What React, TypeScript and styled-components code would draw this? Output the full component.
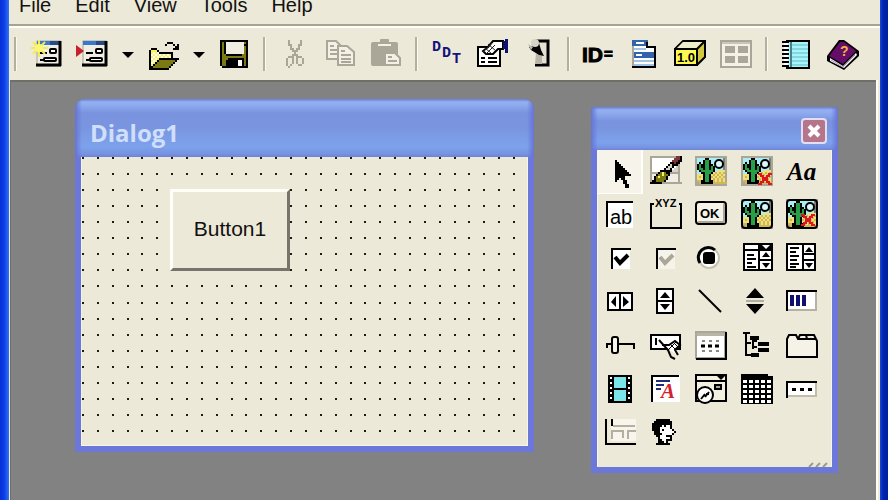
import React from "react";
import styled, { createGlobalStyle, css } from "styled-components";

const GlobalStyle = createGlobalStyle`
  *, *::before, *::after { box-sizing: border-box; }
  body { margin: 0; font-family: "Liberation Sans", Arial, sans-serif; background: #ece9d8; color: #111; overflow: hidden; }
  button { font: inherit; color: inherit; }
`;

const face = "#ece9d8";

const AppWindow = styled.div`
  display: flex;
  flex-direction: column;
  height: 100vh;
  background: ${face};
  border-left: 9px solid #0a3be0;
  border-right: 8px solid #0224ac;
  border-image: linear-gradient(90deg, #0830d4 0, #0a3ce8 4px, #2f74f4 9px, #2f74f4 50%, #1a48d0 calc(100% - 8px), #0224b4 calc(100% - 5px), #001e9c 100%) 0 8 0 9;
`;

const MenuBar = styled.nav`
  display: flex;
  align-items: flex-end;
  gap: 24px;
  height: 26px;
  padding: 0 10px 7px;
  flex: none;
  border-bottom: 2px solid #a5a392;
`;

const MenuItem = styled.button`
  padding: 0;
  border: 0;
  background: none;
  font-size: 20px;
  line-height: 24px;
`;

const ToolBar = styled.div`
  display: flex;
  align-items: center;
  flex: none;
  height: 54px;
  padding-left: 5px;
  border-top: 2px solid #fffef6;
`;

const Rule = styled.span<{ $grip?: boolean }>`
  flex: none;
  width: 3px;
  height: 34px;
  margin: ${(p) => (p.$grip ? "0 6px 0 0" : "0 5px 0 6px")};
  border-left: 2px solid #b3b09f;
  border-right: 1px solid #fbfaf2;
`;

const ToolButton = styled.button<{ $narrow?: boolean }>`
  display: flex;
  align-items: center;
  justify-content: center;
  flex: none;
  width: ${(p) => (p.$narrow ? 25 : 46)}px;
  height: 42px;
  padding: 0;
  border: 0;
  background: none;
`;

const Workspace = styled.main`
  position: relative;
  flex: 1;
  margin: 0 4px 0 1px;
  background: #828282;
  border-top: 2px solid #6f6e68;
  border-left: 1px solid #6f6e68;
  box-shadow: 2px 0 0 #fffef6;
`;

const frame = css`
  position: absolute;
  display: flex;
  flex-direction: column;
  border: 6px solid #6b78da;
  border-top: 0;
  background: #6b78da;
`;

const DialogFrame = styled.section`
  ${frame}
  left: 64px;
  top: 17px;
  width: 459px;
  height: 353px;
  border-radius: 10px 10px 0 0;
`;

const PaletteFrame = styled.section`
  ${frame}
  left: 580px;
  top: 25px;
  width: 247px;
  height: 366px;
  border-radius: 3px 3px 0 0;
`;

const TitleBar = styled.header<{ $small?: boolean }>`
  display: flex;
  align-items: center;
  flex: none;
  height: ${(p) => (p.$small ? 43 : 58)}px;
  margin: 0 -6px;
  padding: ${(p) => (p.$small ? "4px 11px 0" : "9px 15px 0")};
  justify-content: ${(p) => (p.$small ? "flex-end" : "flex-start")};
  border-radius: inherit;
  background:
    linear-gradient(90deg, #6674d6 0, transparent 7px, transparent calc(100% - 7px), #6674d6 100%),
    linear-gradient(#6a7cda 0, #94b0f2 3px, #8eabee 6px, #7a93df 14px, #7a95e0 50%, #7da2ec 82%, #7793e2 94%, #6e84d4 100%);
`;

const Title = styled.h1`
  margin: 0;
  font: bold 24px/32px "Open Sans", "Noto Sans", sans-serif;
  color: #d0dffb;
`;

const CloseButton = styled.button`
  display: flex;
  width: 26px;
  height: 26px;
  padding: 3px;
  border: 2px solid #e3def4;
  border-radius: 4px;
  background: #b5768c;
`;

const Form = styled.div`
  position: relative;
  flex: 1;
  background: ${face};
  border: 1px solid #f7f4ea;
  border-top: 0;
  overflow: hidden;
`;

const DotGrid = styled.svg`
  display: block;
  width: 100%;
  height: 100%;
`;

const FormButton = styled.button`
  position: absolute;
  left: 88px;
  top: 32px;
  width: 120px;
  height: 82px;
  padding: 0 0 3px;
  border: 3px solid;
  border-color: #fffef8 #77756b #77756b #fffef8;
  background: ${face};
  font-size: 21px;
`;

const Palette = styled.div`
  display: flex;
  flex-direction: column;
  flex: 1;
  background: ${face};
  border-left: 1px solid #f7f4ea;
  border-right: 1px solid #f7f4ea;
`;

const ControlGrid = styled.div`
  display: grid;
  grid-template-columns: repeat(5, 1fr);
  grid-template-rows: repeat(7, 1fr);
  height: 305px;
  padding-right: 6px;
`;

const ControlButton = styled.button`
  display: flex;
  align-items: center;
  justify-content: center;
  min-width: 0;
  min-height: 0;
  padding: 0;
  border: 0;
  background: none;
  &[aria-pressed="true"] {
    background: #f5f3ea;
    box-shadow: inset -2px -1px 0 #fffef8;
  }
`;

const Resizer = styled.svg`
  align-self: flex-end;
  width: 24px;
  height: 12px;
`;

const Glyph = styled.svg`
  display: block;
  flex: none;
  width: 32px;
  height: 32px;
  overflow: visible;
`;

const inks: Record<string, string> = {
  k: "#000", w: "#fff", g: "#808078", s: "#aaa799", o: "#7b7a12", y: "#f8f35a", c: "#a9eef6",
  G: "#26a047", t: "#cdb757", Y: "#f1df7c", r: "#dd1521", m: "#7d3636", n: "#10106e",
  b: "#3264ae", l: "#9ec2e8", h: "#d5d3c6", f: "#f0eee2",
};

/* Bitmap rows, one letter per 2px square. */
function Pix({ rows, x = 0, y = 0 }: { rows: string; x?: number; y?: number }) {
  const out: React.ReactNode[] = [];
  rows.trim().split(/\s+/).forEach((row, j) => {
    for (let i = 0; i < row.length; ) {
      let n = 1;
      while (row[i + n] === row[i]) n++;
      if (row[i] !== ".") {
        out.push(<rect key={`${j}-${i}`} x={x + i * 2} y={y + j * 2} width={n * 2} height={2} fill={inks[row[i]]} />);
      }
      i += n;
    }
  });
  return <g shapeRendering="crispEdges">{out}</g>;
}

const L = ({ d, c = "#000", w = 2, f = "none" }: { d: string; c?: string; w?: number; f?: string }) => (
  <path d={d} stroke={c} strokeWidth={w} fill={f} />
);
const F = ({ d, c = "#000" }: { d: string; c?: string }) => <path d={d} fill={c} />;

const DialogArt = () => (
  <>
    <rect x={7} y={3} width={23} height={25} fill="#f0eee2" stroke="#a3a196" strokeWidth={1} />
    <F d="M7 3H20V7H7Z" c="#3a78cc" />
    <F d="M20 3H30V7H20Z" c="#274a86" />
    <L d="M6 27H31M30 3V28" w={3} />
    <L d="M10 15H17M10 22H17" />
    <rect x={20} y={11} width={6} height={4} rx={1} fill="#fff" stroke="#000" strokeWidth={2} />
    <rect x={14} y={20} width={12} height={3} rx={1} fill="#fff" stroke="#000" strokeWidth={2} />
  </>
);

const desert = `
ssssssssssssssss
scccckkcccccccgs
sccckGGkccccccgs
sckckGGkccccccgs
skGkkGGkkcccccgs
skGkkGGkGkccccgs
skGGkGGkGkccccgs
sckGGGGGGkcYYYYs
scckkGGGkYtYtYts
sYYYkGGkYtYtYtYs
sYtYkGGktYtYtYts
sYYYkGGkYtYtYtYs
sttkkGGkktYtYtYs
sstkkkkkkttttttt
ssssssssssssssss`;

const Cactus = () => (
  <>
    <Pix rows={desert} />
    <circle cx={24} cy={8} r={4} fill="#d8f8fb" stroke="#000" strokeWidth={2} />
  </>
);

const cross = `
rr...rr
.rr.rr.
..rrr..
..rrr..
.rr.rr.
rr...rr`;

const ButtonFrame = () => <rect x={1} y={1} width={30} height={28} rx={3} fill="none" stroke="#000" strokeWidth={2} />;

const toolArt: Record<string, React.ReactNode> = {
  New: (
    <>
      <DialogArt />
      <L d="M9 2V19M1 10H18M3 4L15 16M15 4L3 16" c="#f3ec4c" />
      <circle cx={9} cy={10} r={4} fill="#fbf774" />
    </>
  ),
  Import: (
    <>
      <DialogArt />
      <F d="M0 7L8 13L0 19Z" c="#c8202c" />
    </>
  ),
  Open: <Pix y={4} x={2} rows={`
.........kkk...
........k...k.k
.............kk
.kkk........kkk
kyyyk..........
kywywkkkkkkk...
kwywywywywyk...
kywywywywywk...
kwywykkkkkkkkkk
kywykooooooook.
kwykooooooook..
kykooooooook...
kkooooooook....
kkkkkkkkkk.....`} />,
  Save: <Pix x={2} y={2} rows={`
kkkkkkkkkkkkkk
kokfffffffffok
kokfffffffffkk
kokfffffffffok
kokfffffffffok
kokfffffffffok
kokfffffffffok
kookkkkkkkkook
kooooooooooook
koookkkkkkkkok
kookkkkkkwwkok
kookkkkkkwwkok
kookkkkkkwwkok
.kkkkkkkkkkkkk`} />,
  Cut: <Pix x={8} y={2} rows={`
.s.....s.
.s.....s.
.ss...ss.
..s...s..
..ss.ss..
...sss...
....s....
...sss...
.sss.sss.
s..s.s..s
s..s.s..s
s..s.s..s
s.s...ss.
.s.......`} />,
  Copy: (
    <>
      <L d="M3 3H12L17 8V21H3ZM6 8H10M6 12H14M6 16H14" c="#aaa799" f="#f3f1e6" />
      <L d="M14 8H23L30 14V27H14ZM17 13H21M17 17H27M17 21H27M17 24H27" c="#aaa799" f="#f3f1e6" />
    </>
  ),
  Paste: (
    <>
      <rect x={1} y={4} width={27} height={24} rx={2} fill="#aaa799" />
      <rect x={10} y={1} width={9} height={5} rx={1} fill="#aaa799" />
      <L d="M8 7H21" c="#f3f1e6" />
      <L d="M15 15H25L30 20V27H15ZM18 19H22M18 23H27" c="#aaa799" f="#f3f1e6" />
    </>
  ),
  "Custom data": (
    <g fontFamily="Liberation Mono" fontWeight="bold" fontSize={15} fill="#14137c">
      <text x={2} y={13}>D</text><text x={12} y={19}>D</text><text x={22} y={25}>T</text>
    </g>
  ),
  Properties: (
    <>
      <L d="M2 9H24V28H2Z" f="#fff" />
      <L d="M5 20H9M12 20H21M5 24H9M12 24H21" />
      <L d="M12 9L17 3H27V11H22L17 16L10 16L7 13Z" f="#fff" />
      <L d="M7 14L16 5M10 16L19 7M8 9L16 16M12 6L20 13" c="#222" w={1} />
      <F d="M27 3H29V1H32V15H29V11H27Z" c="#10106e" />
    </>
  ),
  "Test dialog": (
    <>
      <L d="M14 3H26V27H13" w={3} f="#e4e1d2" />
      <F d="M14 16L20 18V26H13Z" c="#b9b6a9" />
      <F d="M7 9L17 5L19 12L22 18L17 17L9 12Z" />
      <circle cx={13} cy={5} r={4} fill="#d5d3c6" />
      <F d="M6 6L11 9L9 12Z" c="#bdbaae" />
    </>
  ),
  "Resource identifiers": (
    <g fontFamily="Liberation Sans" fontWeight="bold">
      <text x={0} y={24} fontSize={21} stroke="#000">ID</text>
      <text x={22} y={21} fontSize={15} stroke="#000">=</text>
    </g>
  ),
  "Menu editor": <Pix x={4} y={2} rows={`
bbbbbbbb....
bbwwwwbk....
bbbbbbbk....
swwwwwwkkkkk
sllllllwwwwk
swwwwwwwwwwk
sbbbbbbbbbbk
sbwwwbbbbbbk
sbbbbbbbbbbk
swwwwwwwwwwk
sllllllllllk
swwwwwwwwwwk
sllllllllllk
kkkkkkkkkkkk`} />,
  "Version info": (
    <>
      <L d="M1 11L9 3H31V19L23 27M23 11L31 3" f="#cfc840" />
      <F d="M3 10L9 4H28L22 10Z" c="#efeccb" />
      <rect x={1} y={11} width={22} height={16} fill="#fff94e" stroke="#000" strokeWidth={2} />
      <text x={3} y={24} fontFamily="Liberation Sans" fontWeight="bold" fontSize={13}>1.0</text>
    </>
  ),
  Grid: (
    <>
      <rect x={1} y={3} width={30} height={26} fill="#f4f2e8" stroke="#a9a698" strokeWidth={2} />
      <F d="M5 8H15V15H5ZM18 8H28V15H18ZM5 18H15V25H5ZM18 18H28V25H18Z" c="#aaa799" />
      <L d="M2 5H30" c="#c9c6b8" />
    </>
  ),
  Notebook: (
    <>
      <rect x={7} y={3} width={22} height={27} fill="#a8f4f8" stroke="#000" strokeWidth={2} />
      <L d="M11 4V29" c="#4c7f8a" />
      <L d="M12 7H28M12 11H28M12 15H28M12 19H28M12 23H28M12 27H28" c="#58bdca" w={1} />
      <L d="M2 4H9M2 8H9M2 12H9M2 16H9M2 20H9M2 24H9M2 28H9" />
      <L d="M4 6H8M4 10H8M4 14H8M4 18H8M4 22H8M4 26H8" c="#fff" />
    </>
  ),
  Help: (
    <>
      <F d="M1 18L13 2H18L33 13V18L18 32L1 23Z" />
      <F d="M3 18L14 4H18L30 13L17 26Z" c="#640e67" />
      <F d="M4 20L17 28L30 15L31 17L18 30L4 23Z" c="#fff" />
      <L d="M5 22L17 29L29 17" c="#bb8bc0" w={1} />
      <text x={14} y={18} fontFamily="Liberation Sans" fontWeight="bold" fontSize={14} fill="#f0b33c">?</text>
    </>
  ),
};

const controlArt: [string, React.ReactNode][] = [
  ["Pointer", <Pix x={10} y={4} rows={`
k.......
kk......
kkk.....
kkkk....
kkkkk...
kkkkkk..
kkkkkkk.
kkkkkkkk
kkkkk...
kk.kk...
k...kk..
....kk..
.....kk.
.....kk.`} />],
  ["Custom image", <Pix rows={`
sssssssssssssmmk
swwwwwwwwwwwmmmk
swwwwwwwwwwmmmkk
swwwwwwwwwkkmkk.
swwwwwwwwkhkkks.
swwwwwwwkhhkwhs.
swwwwwwkhhkwhhs.
swwwwkkkkkkhhhs.
sssskoyokksssss.
sffkooyookffffs.
sfkoyoookfffffs.
sfkoooookfffffs.
skkooookffffffs.
kkkkkkssssssssss`} />],
  ["Image", <Cactus />],
  ["Image, disabled", <><Cactus /><Pix rows={cross} x={17} y={17} /></>],
  ["Static text", <text x={1} y={24} fontFamily="Liberation Serif" fontWeight="bold" fontStyle="italic" fontSize={25}>Aa</text>],
  ["Edit box", <><rect x={3} y={4} width={25} height={25} fill="#fff" /><L d="M2 28V3H28" /><text x={5} y={25} fontFamily="Liberation Sans" fontSize={20}>ab</text></>],
  ["Group box", <><L d="M4 5H1V29H31V5H29" /><text x={5} y={8} fontFamily="Liberation Sans" fontWeight="bold" fontSize={11}>XYZ</text></>],
  ["Button", <><rect x={1} y={3} width={30} height={22} rx={3} fill="#f5f3e8" stroke="#000" strokeWidth={2} /><L d="M3 23H29V5" c="#aaa799" /><text x={5} y={19} fontFamily="Liberation Sans" fontWeight="bold" fontSize={13}>OK</text></>],
  ["Image button", <><Cactus /><ButtonFrame /></>],
  ["Image button, disabled", <><Cactus /><ButtonFrame /><Pix rows={cross} x={15} y={15} /></>],
  ["Check box", <><rect x={7} y={6} width={18} height={20} fill="#fff" /><L d="M7 26V6H26" /><L d="M10 14L15 20L23 12" w={4} /></>],
  ["Check box, three state", <><rect x={7} y={6} width={18} height={20} fill="#f5f3ea" /><L d="M7 26V6H26" /><L d="M10 14L15 20L23 12" w={4} c="#aaa799" /></>],
  ["Radio button", <><circle cx={14} cy={15} r={10} fill="#fff" stroke="#c5c2b4" strokeWidth={2} /><L d="M5 20A10 10 0 0 1 20 7" w={3} /><rect x={8} y={9} width={12} height={12} rx={3} /></>],
  ["Combo box", <><rect x={3} y={1} width={28} height={26} fill="#fff" stroke="#000" strokeWidth={2} /><L d="M3 7H31M18 1V27M18 17H31" /><F d="M18 1H31V7H18Z" /><F d="M21 2H29L25 6Z" c="#fff" /><F d="M21 14L25 9L29 14ZM21 20H29L25 25Z" /><L d="M6 12H13M6 16H15M6 20H11M6 24H15" /></>],
  ["List box", <><rect x={1} y={1} width={28} height={26} fill="#fff" stroke="#000" strokeWidth={2} /><L d="M17 1V27M17 11H29M17 17H29" /><F d="M19 9L23 4L27 9ZM19 20H27L23 25Z" /><L d="M4 5H13M4 9H10M4 13H13M4 17H11M4 21H13M4 24H10" /></>],
  ["Horizontal scroll bar", <><rect x={3} y={7} width={24} height={17} fill="#fff" stroke="#000" strokeWidth={2} /><L d="M15 7V24" /><F d="M11 10V21L6 16ZM18 10V21L24 16Z" /></>],
  ["Vertical scroll bar", <><rect x={7} y={3} width={16} height={24} fill="#fff" stroke="#000" strokeWidth={2} /><L d="M7 15H23" /><F d="M10 12H20L15 6ZM10 18H20L15 24Z" /></>],
  ["Line", <L d="M4 4L26 26" />],
  ["Spin", <><F d="M5 12L14 2L23 12ZM5 18H23L14 28Z" /><L d="M5 15H23" c="#77756b" w={1} /></>],
  ["Progress", <><rect x={1} y={5} width={29} height={19} fill="#fff" stroke="#b5b2a5" strokeWidth={2} /><L d="M1 25V5H31" /><F d="M4 9H8V20H4ZM10 9H14V20H10ZM16 9H20V20H16Z" c="#10106e" /></>],
  ["Slider", <><L d="M2 18V14H29V19" /><rect x={7} y={7} width={6} height={16} rx={2} fill="#f7f5ea" stroke="#000" strokeWidth={2} /></>],
  ["Hot key", <><L d="M1 5H30V19H1Z" f="#fff" /><L d="M6 8V15" /><L d="M9 10L18 20L21 27L25 29M12 15L19 15L25 11L30 15L25 20L28 25" f="#fff" /><L d="M20 14L26 20M23 12L28 17M26 12L19 19" w={1} /></>],
  ["List control", <><rect x={1} y={2} width={29} height={26} fill="#fff" stroke="#aaa799" strokeWidth={2} /><L d="M31 2V29H1" /><F d="M2 3H30V6H2Z" c="#b8b5a8" /><L d="M6 16H10M13 16H17M20 16H24" w={3} />{[11, 21].map((y) => <L key={y} d={`M7 ${y}H10M14 ${y}H17M21 ${y}H24`} c="#8b897e" />)}</>],
  ["Tree control", <><L d="M2 3H9M5 3V25H10M5 13H10M12 7V19M12 11H16M12 17H16" /><L d="M9 8H18M10 25H18" w={4} /><L d="M17 14H28M17 20H28" w={4} /></>],
  ["Tab control", <L d="M1 27V9L3 5H10L12 9H30L31 11V27Z M12 9L14 5H20L21 9M21 5H28L30 9" f="#f5f3e8" />],
  ["Animation", <><F d="M3 1H27V29H3Z" /><F d="M9 3H21V14H9ZM9 16H21V27H9Z" c="#7be5ec" />{[3, 8, 13, 18, 23].map((y) => <F key={y} d={`M5 ${y}H7V${y + 2}H5ZM23 ${y}H25V${y + 2}H23Z`} c="#fff" />)}</>],
  ["Rich edit", <><rect x={1} y={1} width={29} height={27} fill="#fff" /><L d="M2 28V2H29" /><L d="M6 7H20M6 11H14M6 15H11" c="#1f2e76" /><text x={11} y={24} fontFamily="Liberation Serif" fontWeight="bold" fontStyle="italic" fontSize={21} fill="#d51e32">A</text></>],
  ["Date picker", <><rect x={1} y={1} width={30} height={26} fill="#f3f0e2" stroke="#000" strokeWidth={2} /><L d="M1 7H31" /><F d="M22 2H30L26 6Z" /><rect x={20} y={11} width={6} height={4} fill="#aaa799" stroke="#000" strokeWidth={2} /><circle cx={10} cy={21} r={8} fill="#fff" stroke="#000" strokeWidth={2} /><L d="M6 25L10 20M10 23L14 18M11 20H14" /></>],
  ["Month calendar", <><F d="M0 0H27V2H32V30H0Z" />{[6, 11, 16, 21, 26].map((y) => [2, 8, 14, 20, 26].map((x) => <rect key={`${x}-${y}`} x={x} y={y} width={4} height={3} fill="#fff" />))}</>],
  ["IP address", <><rect x={1} y={8} width={29} height={14} fill="#fff" stroke="#c0bdaf" strokeWidth={2} /><L d="M1 24V8H31" /><F d="M6 14H10V17H6ZM14 14H18V17H14ZM22 14H26V17H22Z" /></>],
  ["Rebar", <><rect x={6} y={2} width={25} height={22} fill="#f7f5ec" /><L d="M1 2V27H31M7 2V9" /><L d="M8 9H30M7 22V14H18V21M31 14H23V22" c="#b3b0a2" /></>],
  ["Custom control", <Pix x={2} y={2} rows={`
..kkkkkkk...
.kkkkkkkkk..
kkkkkkkkkk..
kkkkkwkwwk..
kkkkwwwwwk..
kkkkwkwwwwk.
.kkkwwwwwwwk
.kkkkwwwwwk.
..kkwwwkkk..
...kwwwwwk..
...kkwwkkk..
...kkkwk....
..kkkkkkk...`} />],
];

const tools: (string | null)[] = [
  "New", "Import", ">Import options", "Open", ">Recent files", "Save", null,
  "Cut", "Copy", "Paste", null,
  "Custom data", "Properties", "Test dialog", null,
  "Resource identifiers", "Menu editor", "Version info", "Grid", null,
  "Notebook", "Help",
];

function FormDots() {
  const dots: React.ReactNode[] = [];
  for (let r = 0; r < 18; r++)
    for (let c = 0; c < 30; c++)
      dots.push(<rect key={`${r}-${c}`} x={Math.round((c * 431) / 29)} y={Math.round((r * 273) / 17)} width={2} height={2} />);
  return <DotGrid aria-hidden="true" fill="#1d1c14">{dots}</DotGrid>;
}

export default function App() {
  return (
    <AppWindow>
      <GlobalStyle />
      <MenuBar aria-label="Main menu">
        {["File", "Edit", "View", "Tools", "Help"].map((m) => <MenuItem key={m}>{m}</MenuItem>)}
      </MenuBar>
      <ToolBar role="toolbar" aria-label="Resource tools">
        <Rule $grip />
        {tools.map((t, i) => {
          if (t === null) return <Rule key={i} />;
          if (t[0] === ">")
            return (
              <ToolButton key={i} $narrow aria-label={t.slice(1)}>
                <svg width="12" height="8" viewBox="0 0 12 8"><path d="M0 2H12L6 8Z" /></svg>
              </ToolButton>
            );
          return (
            <ToolButton key={i} aria-label={t}>
              <Glyph viewBox="0 0 32 32">{toolArt[t]}</Glyph>
            </ToolButton>
          );
        })}
      </ToolBar>
      <Workspace>
        <DialogFrame aria-label="Dialog1">
          <TitleBar><Title>Dialog1</Title></TitleBar>
          <Form>
            <FormDots />
            <FormButton>Button1</FormButton>
          </Form>
        </DialogFrame>
        <PaletteFrame aria-label="Controls">
          <TitleBar $small>
            <CloseButton aria-label="Close">
              <svg width="16" height="16" viewBox="0 0 16 16"><path d="M3 3L13 13M13 3L3 13" stroke="#fff" strokeWidth="4" /></svg>
            </CloseButton>
          </TitleBar>
          <Palette>
            <ControlGrid>
              {controlArt.map(([name, art], i) => (
                <ControlButton key={name} aria-label={name} aria-pressed={i === 0}>
                  <Glyph viewBox="0 0 32 32">{art}</Glyph>
                </ControlButton>
              ))}
            </ControlGrid>
            <Resizer viewBox="0 0 24 12" aria-hidden="true">
              <path d="M2 12L6 8M9 12L13 8M16 12L20 8" stroke="#9d9a8c" strokeWidth="2" />
            </Resizer>
          </Palette>
        </PaletteFrame>
      </Workspace>
    </AppWindow>
  );
}
